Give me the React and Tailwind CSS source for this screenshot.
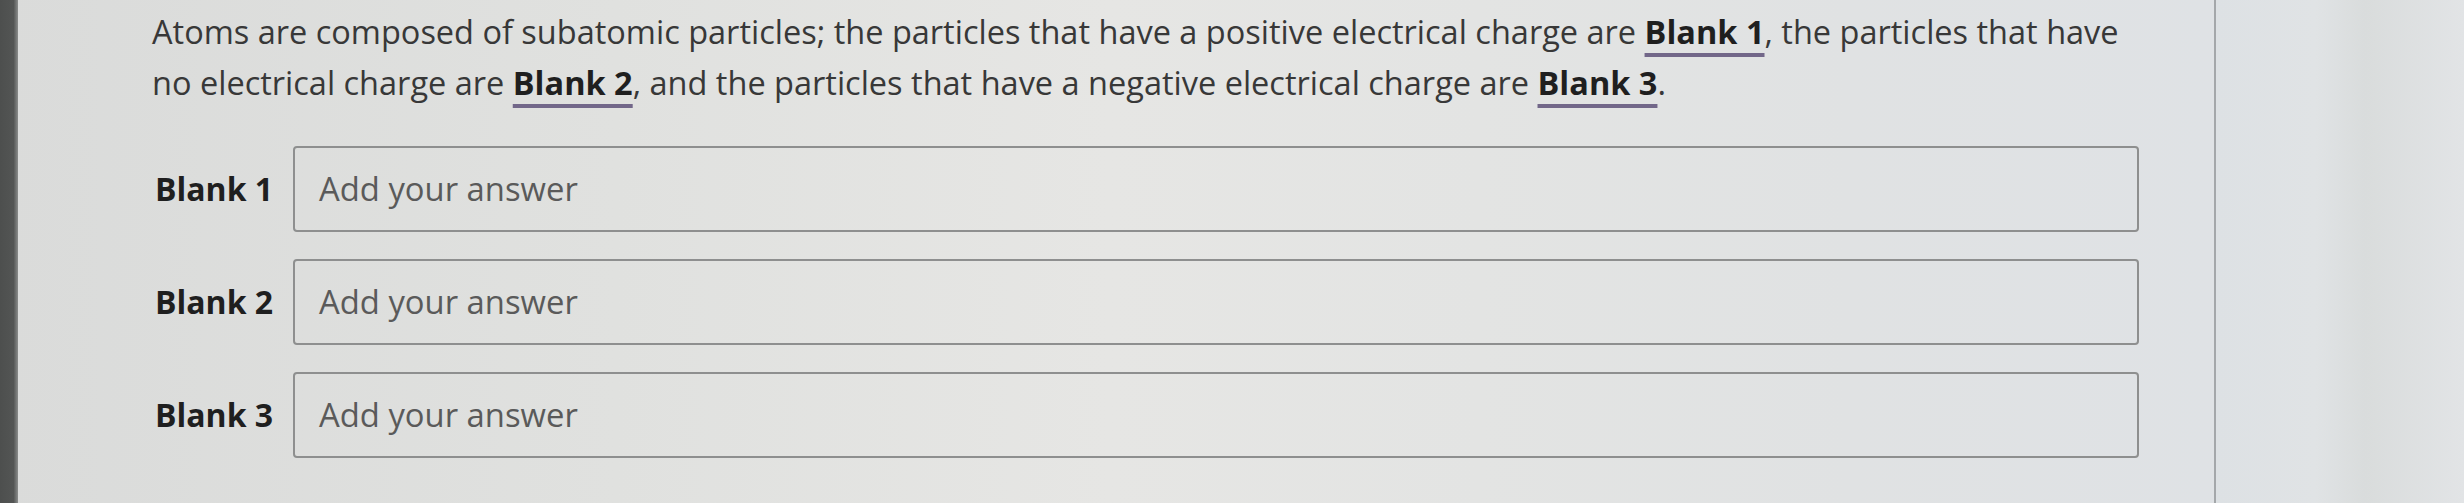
import React from "react";

const blanks = ["Blank 1", "Blank 2", "Blank 3"];

const BlankRef = ({ children }) => (
  <span className="font-bold text-[#1f1f1f] underline decoration-[#726789] decoration-[4px] underline-offset-[9px]">
    {children}
  </span>
);

const App = () => {
  return (
    <div
      className="flex h-[503px] w-[2464px] overflow-hidden bg-[linear-gradient(90deg,#dadbda_0%,#e0e1df_25%,#e6e6e4_45%,#e3e4e3_60%,#e0e2e3_75%,#dfe2e5_90%,#e1e3e4_100%)]"
      style={{ fontFamily: '"Open Sans", "Noto Sans", sans-serif' }}
    >
      <div className="w-[18px] shrink-0 bg-[linear-gradient(90deg,#4d4f4e_0%,#535554_75%,#8a8c8b_100%)]" />
      <div className="w-[2198px] shrink-0 border-r-2 border-[#a4a7aa] pl-[134px] pt-[6px]">
        <p className="w-[1990px] text-[32.5px] leading-[51px] text-[#383838]">
          Atoms are composed of subatomic particles; the particles that have a positive electrical charge are{" "}
          <BlankRef>Blank 1</BlankRef>, the particles that have no electrical charge are{" "}
          <BlankRef>Blank 2</BlankRef>, and the particles that have a negative electrical charge are{" "}
          <BlankRef>Blank 3</BlankRef>.
        </p>

        <div className="mt-[38px] flex flex-col gap-[27px]">
          {blanks.map((b) => (
            <div key={b} className="flex items-center">
              <label className="w-[141px] shrink-0 pl-[3px] text-[32px] font-bold text-[#1f1f1f]">{b}</label>
              <div className="flex h-[86px] w-[1846px] items-center rounded-[4px] border-2 border-[#8e8f8f] px-[24px] text-[32.8px] text-[#5a5a5a]">
                Add your answer
              </div>
            </div>
          ))}
        </div>
      </div>
      <div className="flex-1 bg-[linear-gradient(90deg,#dde1e4_0%,#e0e3e5_40%,#d9dcdc_60%,#e2e4e6_100%)]" />
    </div>
  );
};

export default App;
